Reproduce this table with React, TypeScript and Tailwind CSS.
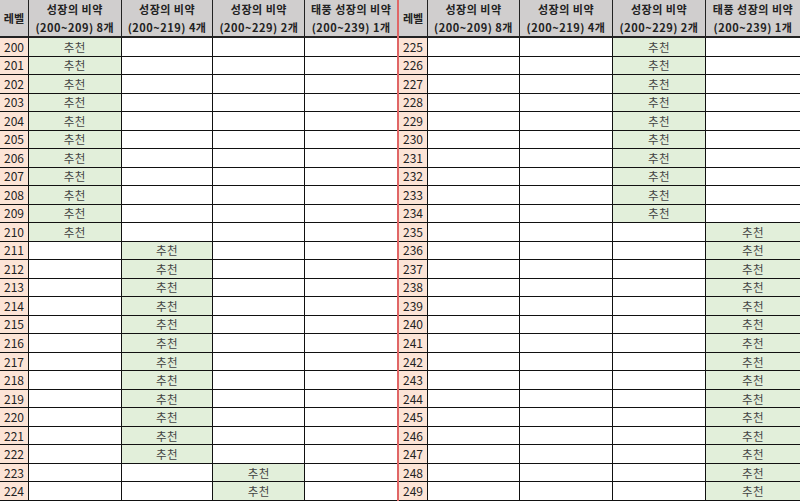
const cols = [
  { t: '성장의 비약', r: '(200~209) 8개' },
  { t: '성장의 비약', r: '(200~219) 4개' },
  { t: '성장의 비약', r: '(200~229) 2개' },
  { t: '태풍 성장의 비약', r: '(200~239) 1개' },
];

// which column gets the 추천 mark for a level
function pick(level: number) {
  if (level <= 210) return 0;
  if (level <= 222) return 1;
  if (level <= 234) return 2;
  return 3;
}

const left = Array.from({ length: 25 }, (_, i) => 200 + i);
const right = Array.from({ length: 25 }, (_, i) => 225 + i);

function Half({ levels, last }: { levels: number[]; last?: boolean }) {
  const widths = last
    ? ['w-[29px]', 'w-[92px]', 'w-[93px]', 'w-[93px]', 'flex-1']
    : ['w-[29px]', 'w-[93px]', 'w-[92px]', 'w-[92px]', 'w-[92px]'];
  return (
    <div className={`flex flex-col h-full ${last ? 'flex-1' : 'w-[399px] border-r-2 border-r-[#e06666]'}`}>
      {/* header */}
      <div className="flex shrink-0 h-[38px] bg-[#d0cece] border-b-2 border-[#222]">
        <div className={`${widths[0]} flex items-center justify-center border-r border-[#222] font-bold text-[11px] text-[#222]`}>
          레벨
        </div>
        {cols.map((c, i) => (
          <div
            key={i}
            className={`${widths[i + 1]} flex flex-col items-center justify-center gap-[4px] ${i < 3 ? 'border-r border-[#222]' : ''} font-bold text-[11px] leading-[14px] tracking-[0.5px] text-[#222]`}
          >
            <span>{c.t}</span>
            <span>{c.r}</span>
          </div>
        ))}
      </div>
      {/* rows */}
      {levels.map((lv) => {
        const g = pick(lv);
        return (
          <div key={lv} className="flex flex-1 min-h-0 border-b border-[#111] leading-[14px]">
            <div className={`${widths[0]} flex items-center justify-center bg-[#fce4d6] border-r border-[#111] text-[12px] text-[#222]`}>
              {lv}
            </div>
            {cols.map((_, i) => (
              <div
                key={i}
                className={`${widths[i + 1]} flex items-center justify-center text-[11.5px] tracking-[0.5px] text-[#444] ${i < 3 ? 'border-r border-[#111]' : ''} ${g === i ? 'bg-[#e2efda]' : 'bg-white'}`}
              >
                {g === i ? '추천' : ''}
              </div>
            ))}
          </div>
        );
      })}
    </div>
  );
}

export default function App() {
  return (
    <div
      className="flex w-[800px] h-[501px] bg-white overflow-hidden"
      style={{ fontFamily: '"Noto Sans CJK KR", "Noto Sans", sans-serif' }}
    >
      <Half levels={left} />
      <Half levels={right} last />
    </div>
  );
}
